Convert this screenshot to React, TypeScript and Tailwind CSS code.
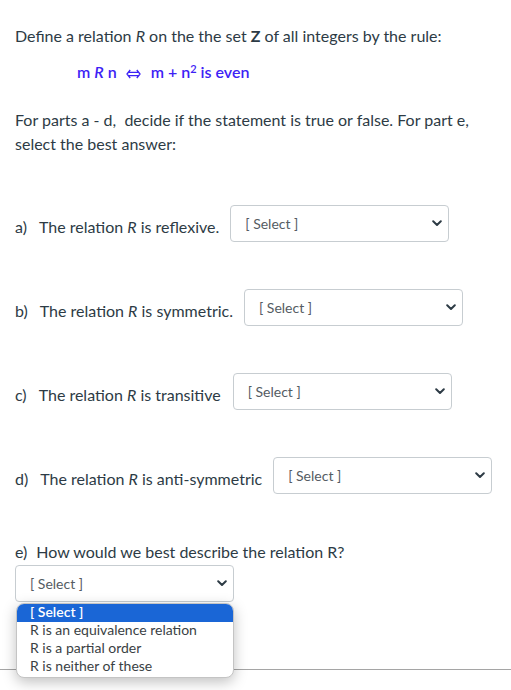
import React from "react";

const Chevron = () => (
  <svg width="10" height="7" viewBox="0 0 10 7" className="shrink-0">
    <path d="M1.2 1.3 L5 5 L8.8 1.3" fill="none" stroke="#2d3b45" strokeWidth="2" strokeLinecap="round" strokeLinejoin="round" />
  </svg>
);

// double-headed double arrow, as in the formula
const IffArrow = () => (
  <svg width="15" height="10" viewBox="0 0 15 10" className="inline-block align-[-1px] ml-[9px] mr-[10px]">
    <path d="M4.2 1 L1 5 L4.2 9 M10.8 1 L14 5 L10.8 9 M2.8 3.3 H12.2 M2.8 6.7 H12.2" fill="none" stroke="#3d22f5" strokeWidth="1.3" strokeLinejoin="round" />
  </svg>
);

const SelectBox = () => (
  <div className="w-[219px] h-[37px] shrink-0 rounded-[4px] border border-[#c7cdd1] bg-white flex items-center justify-between pl-[14px] pr-[6px] text-[14px] text-[#555c63]">
    <span>[ Select ]</span>
    <Chevron />
  </div>
);

const rows = [
  { letter: "a)", pre: "The relation ", post: " is reflexive.", gap: "ml-[11px]" },
  { letter: "b)", pre: "The relation ", post: " is symmetric.", gap: "ml-[11px]" },
  { letter: "c)", pre: "The relation ", post: " is transitive", gap: "ml-[12px]" },
  { letter: "d)", pre: "The relation ", post: " is anti-symmetric", gap: "ml-[11px]" },
];

const options = ["R is an equivalence relation", "R is a partial order", "R is neither of these"];

export default function App() {
  return (
    <div className="relative min-h-[690px] bg-white text-[#2d3b45] text-[16px] leading-[24px] font-['Lato',sans-serif] pt-6 px-[15px] overflow-hidden">
      <p>
        Define a relation <i>R</i> on the the set <b>Z</b> of all integers by the rule:
      </p>
      <p className="mt-3 ml-[62px] h-[24px] text-[#3d22f5] font-semibold">
        m <i>R</i> n
        <IffArrow />
        m + n<sup className="text-[11px] leading-none">2</sup> is even
      </p>
      <p className="mt-6">
        For parts a - d,&nbsp; decide if the statement is true or false. For part e, select the best answer:
      </p>

      <div className="mt-[49px] flex flex-col gap-[47px]">
        {rows.map((r) => (
          <div key={r.letter} className="flex items-start">
            <span className="mt-[10px] whitespace-nowrap">
              <span className="mr-[12px]">{r.letter}</span>
              {r.pre}
              <i>R</i>
              {r.post}
            </span>
            <div className={r.gap}>
              <SelectBox />
            </div>
          </div>
        ))}
      </div>

      <p className="mt-[46px]">
        <span className="mr-[9px]">e)</span>How would we best describe the relation R?
      </p>
      <div className="mt-px">
        <SelectBox />
      </div>

      <div className="absolute left-0 right-0 top-[669px] border-t border-[#a5a5a5]" />

      <div className="absolute left-[16px] top-[603px] w-[218px] rounded-[8px] bg-white border border-[#c4c4c4] shadow-[0_4px_14px_rgba(0,0,0,0.25)] overflow-hidden text-[14px] leading-[15px] text-[#3a3f44] pb-[1px]">
        <div className="bg-[#1a66d6] text-white font-semibold pl-[13px] h-[18px]">[ Select ]</div>
        {options.map((o) => (
          <div key={o} className="pl-[13px] h-[18px]">
            {o}
          </div>
        ))}
      </div>
    </div>
  );
}
